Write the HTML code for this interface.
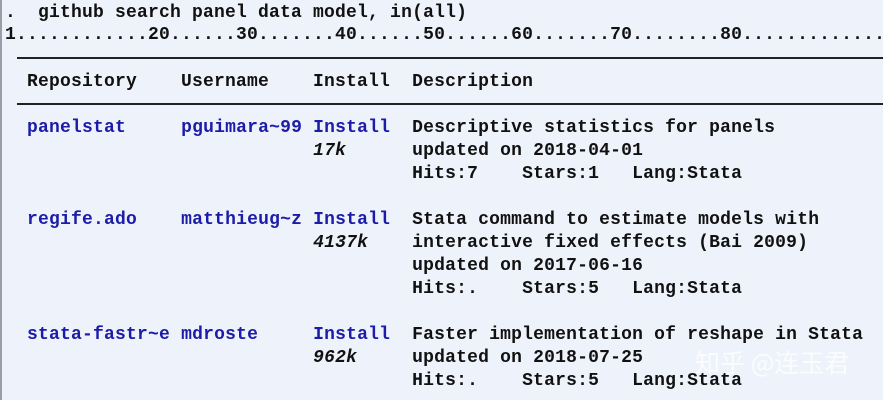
<!DOCTYPE html>
<html><head><style>
html,body{margin:0;padding:0}
body{width:883px;height:400px;background:#eef2fa;position:relative;overflow:hidden;font-family:"Liberation Mono","Courier New",monospace;font-weight:bold;font-size:18px;letter-spacing:0.2px;color:#111}
.bl{position:absolute;left:0;top:0;width:2px;height:400px;background:#9a9ea6}
.l{position:absolute;left:5px;white-space:pre;line-height:23px;height:23px}
.b{color:#1c1ca8}
i{font-style:italic}
.hr{position:absolute;left:17px;right:0;height:1.5px;background:#222}
.wm{position:absolute;left:695px;top:344px;font-family:"Noto Sans CJK SC",sans-serif;font-weight:normal;font-size:25px;color:rgba(255,255,255,0.75);letter-spacing:0;white-space:nowrap}
</style></head><body>
<div class="bl"></div>
<div class="l" style="top:2px">.  github search panel data model, in(all)</div>
<div class="l" style="top:24px">1............20......30.......40......50......60.......70........80..............</div>
<div class="hr" style="top:57px"></div>
<div class="l" style="top:71px">  Repository    Username    Install  Description</div>
<div class="hr" style="top:103px"></div>
<div class="l" style="top:117px">  <span class="b">panelstat</span>     <span class="b">pguimara~99</span> <span class="b">Install</span>  Descriptive statistics for panels</div>
<div class="l" style="top:140px">                            <i>17k</i>      updated on 2018-04-01</div>
<div class="l" style="top:163px">                                     Hits:7    Stars:1   Lang:Stata</div>
<div class="l" style="top:209px">  <span class="b">regife.ado</span>    <span class="b">matthieug~z</span> <span class="b">Install</span>  Stata command to estimate models with</div>
<div class="l" style="top:232px">                            <i>4137k</i>    interactive fixed effects (Bai 2009)</div>
<div class="l" style="top:255px">                                     updated on 2017-06-16</div>
<div class="l" style="top:278px">                                     Hits:.    Stars:5   Lang:Stata</div>
<div class="l" style="top:324px">  <span class="b">stata-fastr~e</span> <span class="b">mdroste</span>     <span class="b">Install</span>  Faster implementation of reshape in Stata</div>
<div class="l" style="top:347px">                            <i>962k</i>     updated on 2018-07-25</div>
<div class="l" style="top:370px">                                     Hits:.    Stars:5   Lang:Stata</div>
<div class="wm">知乎 @连玉君</div>
</body></html>
